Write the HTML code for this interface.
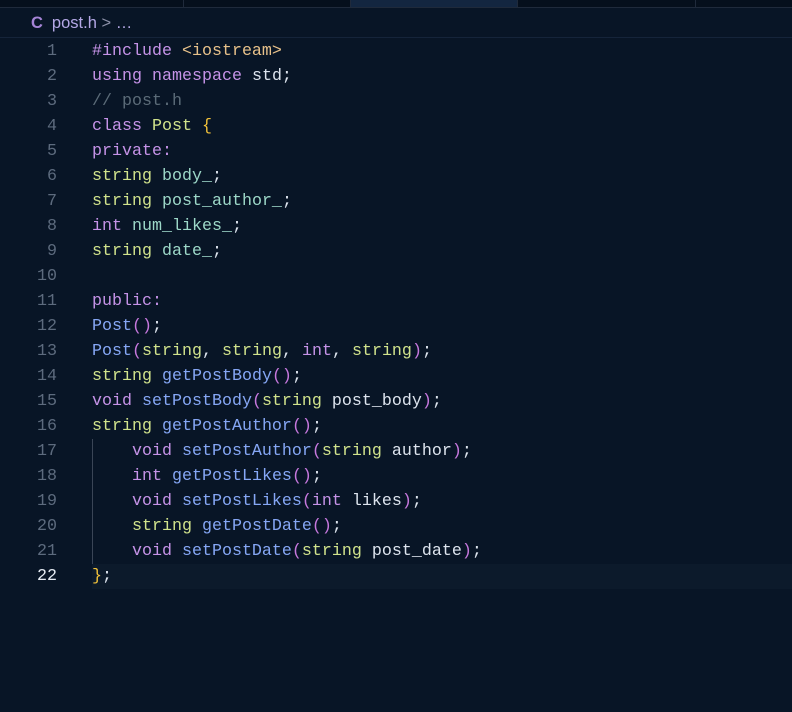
<!DOCTYPE html>
<html><head><meta charset="utf-8"><style>
html,body{margin:0;padding:0;width:792px;height:712px;overflow:hidden;background:#081526;}
.tabs{position:absolute;left:0;top:0;width:792px;height:7px;background:#050f1c;border-bottom:1px solid #1f2a3b;}
.tab{position:absolute;top:0;height:7px;border-right:1px solid #1f2a3b;}
.bc{position:absolute;left:31px;top:14px;font:16.5px "Liberation Sans",sans-serif;color:#b4a8e6;}
.bc b{color:#a584d6;font-weight:bold;margin-right:9px;}
.sep{position:absolute;left:0;top:37px;width:792px;height:1px;background:#15243a;}
.code{position:absolute;left:0;top:39px;width:792px;font:16.67px/25px "Liberation Mono",monospace;}
.l{position:relative;height:25px;white-space:pre;}
.n{position:absolute;left:0;width:57px;text-align:right;color:#5d6b7e;}
.t{position:absolute;left:92px;color:#dde4ee;}
.cur::before{content:"";position:absolute;left:92px;right:0;top:0;height:25px;background:#0c1a2b;}
.cur .n{color:#e6ecf4;}
.k{color:#c693e8}.y{color:#d1e38c}.f{color:#86a7f5}.p{color:#c678dd}.v{color:#9dd8c8}.c{color:#5b6b78}.s{color:#e7c18a}.g{color:#f2c23a}
.guide{position:absolute;left:92px;top:439px;width:1px;height:125px;background:#3a4556;}
</style></head><body>
<div class="tabs">
<div class="tab" style="left:0;width:183px"></div>
<div class="tab" style="left:184px;width:166px"></div>
<div class="tab" style="left:351px;width:166px;background:#132640"></div>
<div class="tab" style="left:518px;width:177px"></div>
</div>
<div class="bc"><b>C</b>post.h <span style="color:#8c90a8">&gt;</span> …</div>
<div class="sep"></div>
<div class="guide"></div>
<div class="code">
<div class="l"><span class="n">1</span><span class="t"><span class="k">#include</span> <span class="s">&lt;iostream&gt;</span></span></div>
<div class="l"><span class="n">2</span><span class="t"><span class="k">using</span> <span class="k">namespace</span> std;</span></div>
<div class="l"><span class="n">3</span><span class="t"><span class="c">// post.h</span></span></div>
<div class="l"><span class="n">4</span><span class="t"><span class="k">class</span> <span class="y">Post</span> <span class="g">{</span></span></div>
<div class="l"><span class="n">5</span><span class="t"><span class="k">private:</span></span></div>
<div class="l"><span class="n">6</span><span class="t"><span class="y">string</span> <span class="v">body_</span>;</span></div>
<div class="l"><span class="n">7</span><span class="t"><span class="y">string</span> <span class="v">post_author_</span>;</span></div>
<div class="l"><span class="n">8</span><span class="t"><span class="k">int</span> <span class="v">num_likes_</span>;</span></div>
<div class="l"><span class="n">9</span><span class="t"><span class="y">string</span> <span class="v">date_</span>;</span></div>
<div class="l"><span class="n">10</span><span class="t"></span></div>
<div class="l"><span class="n">11</span><span class="t"><span class="k">public:</span></span></div>
<div class="l"><span class="n">12</span><span class="t"><span class="f">Post</span><span class="p">()</span>;</span></div>
<div class="l"><span class="n">13</span><span class="t"><span class="f">Post</span><span class="p">(</span><span class="y">string</span>, <span class="y">string</span>, <span class="k">int</span>, <span class="y">string</span><span class="p">)</span>;</span></div>
<div class="l"><span class="n">14</span><span class="t"><span class="y">string</span> <span class="f">getPostBody</span><span class="p">()</span>;</span></div>
<div class="l"><span class="n">15</span><span class="t"><span class="k">void</span> <span class="f">setPostBody</span><span class="p">(</span><span class="y">string</span> post_body<span class="p">)</span>;</span></div>
<div class="l"><span class="n">16</span><span class="t"><span class="y">string</span> <span class="f">getPostAuthor</span><span class="p">()</span>;</span></div>
<div class="l"><span class="n">17</span><span class="t">    <span class="k">void</span> <span class="f">setPostAuthor</span><span class="p">(</span><span class="y">string</span> author<span class="p">)</span>;</span></div>
<div class="l"><span class="n">18</span><span class="t">    <span class="k">int</span> <span class="f">getPostLikes</span><span class="p">()</span>;</span></div>
<div class="l"><span class="n">19</span><span class="t">    <span class="k">void</span> <span class="f">setPostLikes</span><span class="p">(</span><span class="k">int</span> likes<span class="p">)</span>;</span></div>
<div class="l"><span class="n">20</span><span class="t">    <span class="y">string</span> <span class="f">getPostDate</span><span class="p">()</span>;</span></div>
<div class="l"><span class="n">21</span><span class="t">    <span class="k">void</span> <span class="f">setPostDate</span><span class="p">(</span><span class="y">string</span> post_date<span class="p">)</span>;</span></div>
<div class="l cur"><span class="n">22</span><span class="t"><span class="g">}</span>;</span></div>
</div>
</body></html>
